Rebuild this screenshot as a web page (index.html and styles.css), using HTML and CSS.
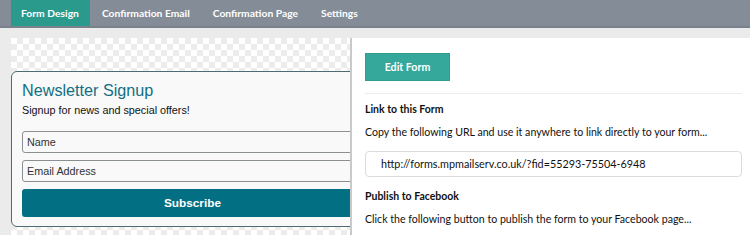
FILE: index.html
```html
<!DOCTYPE html>
<html>
<head>
<meta charset="utf-8">
<link rel="stylesheet" href="styles.css">
</head>
<body>
<nav class="tabs">
  <a class="tab active">Form Design</a>
  <a class="tab">Confirmation Email</a>
  <a class="tab">Confirmation Page</a>
  <a class="tab">Settings</a>
</nav>
<main class="workspace">
  <section class="canvas">
    <div class="card">
      <h1 class="card-title">Newsletter Signup</h1>
      <p class="card-sub">Signup for news and special offers!</p>
      <div class="field">Name</div>
      <div class="field">Email Address</div>
      <div class="subscribe">Subscribe</div>
    </div>
  </section>
  <aside class="panel">
    <div class="edit-btn">Edit Form</div>
    <hr class="rule">
    <h2 class="panel-head">Link to this Form</h2>
    <p class="panel-text">Copy the following URL and use it anywhere to link directly to your form...</p>
    <div class="url-box">http://forms.mpmailserv.co.uk/?fid=55293-75504-6948</div>
    <h2 class="panel-head">Publish to Facebook</h2>
    <p class="panel-text">Click the following button to publish the form to your Facebook page...</p>
  </aside>
</main>
</body>
</html>
```
FILE: styles.css
```css
* { box-sizing: border-box; }
html, body { margin: 0; padding: 0; }
body {
  width: 750px;
  height: 235px;
  overflow: hidden;
  background: #ebebeb;
  font-family: "Lato", "Open Sans", sans-serif;
}
.tabs {
  display: flex;
  height: 28px;
  padding-left: 11px;
  background: #848c97;
  border-bottom: 2px solid #79818c;
}
.tab {
  display: flex;
  align-items: center;
  padding: 0 11px 0 10px;
  margin-right: 2px;
  color: #fff;
  font-weight: bold;
  font-size: 10.3px;
}
.tab.active { background: #299a8c; }
.workspace {
  display: flex;
  margin-top: 10px;
  padding-left: 11px;
  height: 197px;
}
.canvas {
  width: 339px;
  overflow: hidden;
  padding-top: 33px;
  background: repeating-conic-gradient(#ececec 0 25%, #fff 0 50%) 0 0 / 12px 12px;
}
.card {
  width: 363px;
  height: 156px;
  background: #f9f9f9;
  border: 1px solid #4d6b72;
  border-radius: 6px;
  padding: 7px 10px 0 10px;
  font-family: "Liberation Sans", Arial, sans-serif;
}
.card-title {
  margin: 0;
  font-size: 16.2px;
  font-weight: normal;
  color: #136f84;
  line-height: 22px;
}
.card-sub {
  margin: 2px 0 14px;
  font-size: 10.8px;
  color: #111;
  line-height: 14px;
}
.field {
  height: 22px;
  margin-bottom: 7px;
  border: 1px solid #8a8f91;
  border-radius: 3px;
  background: #f9f9f9;
  padding-left: 4px;
  font-size: 10.8px;
  line-height: 20px;
  color: #333;
}
.subscribe {
  height: 28px;
  background: #036f82;
  border-radius: 3px;
  color: #fff;
  font-weight: bold;
  font-size: 11.8px;
  line-height: 28px;
  text-align: center;
}
.panel {
  flex: 1;
  background: #fff;
  border-left: 2px solid #c9c9c9;
  padding: 15px 8px 0 13px;
  color: #111;
}
.edit-btn {
  width: 85px;
  height: 28px;
  background: #35a89b;
  border: 1px solid #2e9e91;
  color: #fff;
  font-weight: bold;
  font-size: 10.6px;
  line-height: 26px;
  text-align: center;
}
.rule {
  margin: 12px 0 0;
  border: 0;
  border-top: 1px solid #ececec;
}
.panel-head {
  margin: 8px 0 0;
  font-size: 10.5px;
  font-weight: bold;
  line-height: 15px;
}
.panel-text {
  margin: 10px 0 0;
  font-size: 10.6px;
  line-height: 15px;
}
.url-box {
  margin: 11px 0 12px;
  height: 26px;
  border: 1px solid #dcdcdc;
  border-radius: 4px;
  padding-left: 15px;
  font-size: 10.8px;
  line-height: 24px;
}
.url-box + .panel-head { margin-top: 12px; }
.panel-head + .panel-text { margin-top: 8px; }
```
